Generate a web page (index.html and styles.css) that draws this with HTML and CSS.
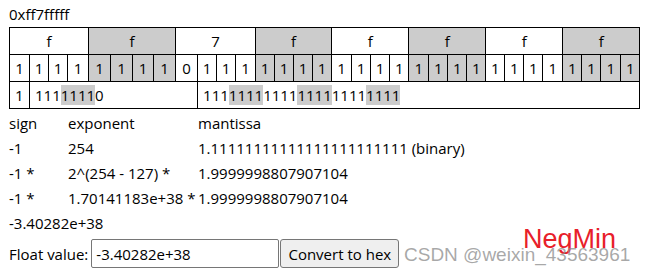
FILE: index.html
```html
<!DOCTYPE html>
<html>
<head>
<meta charset="utf-8">
<link rel="stylesheet" href="styles.css">
</head>
<body>
<div class="hexval">0xff7fffff</div>
<table class="bits">
  <colgroup>
    <col class="w20"><col class="w19" span="2"><col class="w21">
    <col class="w22" span="2"><col class="w21"><col class="w22">
    <col class="w22"><col class="w19" span="2"><col class="w20">
    <col class="w19" span="4">
    <col class="w20"><col class="w19" span="3">
    <col class="w20"><col class="w19" span="3">
    <col class="w19" span="3"><col class="w20">
    <col class="w19" span="2"><col class="w20"><col class="w19">
  </colgroup>
  <tr class="hex">
    <td colspan="4">f</td><td colspan="4" class="g">f</td>
    <td colspan="4">7</td><td colspan="4" class="g">f</td>
    <td colspan="4">f</td><td colspan="4" class="g">f</td>
    <td colspan="4">f</td><td colspan="4" class="g">f</td>
  </tr>
  <tr class="bit">
    <td>1</td><td>1</td><td>1</td><td>1</td>
    <td class="g">1</td><td class="g">1</td><td class="g">1</td><td class="g">1</td>
    <td>0</td><td>1</td><td>1</td><td>1</td>
    <td class="g">1</td><td class="g">1</td><td class="g">1</td><td class="g">1</td>
    <td>1</td><td>1</td><td>1</td><td>1</td>
    <td class="g">1</td><td class="g">1</td><td class="g">1</td><td class="g">1</td>
    <td>1</td><td>1</td><td>1</td><td>1</td>
    <td class="g">1</td><td class="g">1</td><td class="g">1</td><td class="g">1</td>
  </tr>
  <tr class="parts">
    <td>1</td>
    <td colspan="8">111<span class="g">1111</span>0</td>
    <td colspan="23">111<span class="g">1111</span>1111<span class="g">1111</span>1111<span class="g">1111</span></td>
  </tr>
</table>
<div class="calc">
  <div>sign</div><div>exponent</div><div>mantissa</div>
  <div>-1</div><div>254</div><div>1.11111111111111111111111 (binary)</div>
  <div>-1 *</div><div>2^(254 - 127) *</div><div>1.9999998807907104</div>
  <div>-1 *</div><div>1.70141183e+38 *</div><div>1.9999998807907104</div>
  <div class="full">-3.40282e+38</div>
</div>
<form class="form">
  <label class="label" for="fv">Float value:</label>
  <input class="input" id="fv" type="text" value="-3.40282e+38">
  <button class="btn" type="button">Convert to hex</button>
</form>
<div class="wm-name">NegMin</div>
<div class="wm-csdn">CSDN @weixin_43563961</div>
</body>
</html>
```
FILE: styles.css
```css
html, body {
  margin: 0;
  padding: 0;
  background: #fff;
}
body {
  padding: 4px 9px 0 9px;
  font-family: "Open Sans", "Noto Sans", sans-serif;
  font-size: 15px;
  color: #000;
}
.hexval {
  line-height: 20px;
}
.bits {
  margin-top: 3px;
  border-collapse: collapse;
  table-layout: fixed;
  width: 631px;
}
.w19 { width: 19px; }
.w20 { width: 20px; }
.w21 { width: 21px; }
.w22 { width: 22px; }
.bits td {
  border: 1px solid #000;
  height: 26px;
  padding: 0;
  line-height: 20px;
  text-align: center;
  white-space: nowrap;
  overflow: hidden;
}
.bits .parts td {
  text-align: left;
  padding-left: 5px;
}
.g {
  background: #cccccc;
}
.calc {
  margin-top: 2px;
  display: grid;
  grid-template-columns: 59px 130px auto;
  grid-auto-rows: 25px;
  line-height: 25px;
  white-space: nowrap;
}
.calc .full {
  grid-column: 1 / -1;
}
.form {
  margin: 3px 0 0 0;
  display: flex;
  align-items: center;
}
.label {
  margin-right: 3px;
}
.input {
  box-sizing: border-box;
  width: 188px;
  height: 29px;
  border: 1px solid #767676;
  border-radius: 2px;
  padding: 0 4px;
  font-family: inherit;
  font-size: 15px;
  color: #000;
  margin: 0;
}
.btn {
  box-sizing: border-box;
  margin: 0 0 0 1px;
  height: 29px;
  width: 119px;
  padding: 0;
  border: 1px solid #767676;
  border-radius: 3px;
  background: #efefef;
  font-family: inherit;
  font-size: 15px;
  color: #000;
}
.wm-name {
  position: absolute;
  left: 523px;
  top: 226px;
  font-family: "Liberation Sans", Arial, sans-serif;
  font-size: 27px;
  line-height: 27px;
  color: #e8202a;
}
.wm-csdn {
  position: absolute;
  left: 404px;
  top: 245px;
  font-family: "Liberation Sans", Arial, sans-serif;
  font-size: 19px;
  line-height: 19px;
  color: rgba(140, 140, 140, 0.75);
}
```
